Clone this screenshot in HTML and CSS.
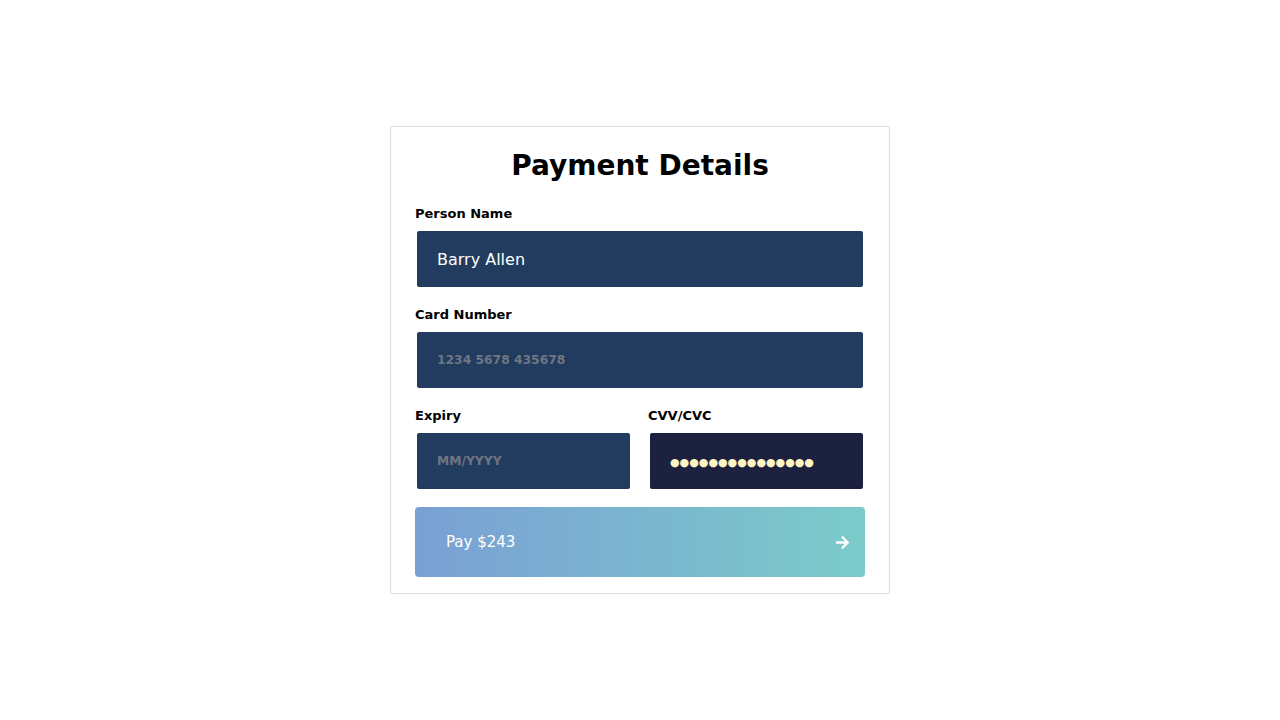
FILE: index.html
```html
<!DOCTYPE html>
<html lang="en">
<head>
<meta charset="utf-8">
<title>Payment Details</title>
<link rel="stylesheet" href="styles.css">
</head>
<body>
<main class="page">
  <form class="card">
    <h1 class="title">Payment Details</h1>
    <div class="field">
      <label class="label">Person Name</label>
      <div class="input"><span class="value">Barry Allen</span></div>
    </div>
    <div class="field">
      <label class="label">Card Number</label>
      <div class="input"><span class="placeholder">1234 5678 435678</span></div>
    </div>
    <div class="row">
      <div class="field">
        <label class="label">Expiry</label>
        <div class="input"><span class="placeholder">MM/YYYY</span></div>
      </div>
      <div class="field">
        <label class="label">CVV/CVC</label>
        <div class="input input-focus"><span class="dots">●●●●●●●●●●●●●●●</span></div>
      </div>
    </div>
    <button type="button" class="pay">
      <span>Pay $243</span>
      <svg class="arrow" viewBox="0 0 448 512" width="15" height="15"><path fill="#fff" d="M190.5 66.9l22.2-22.2c9.4-9.4 24.6-9.4 33.9 0L441 239c9.4 9.4 9.4 24.6 0 33.9L246.6 467.3c-9.4 9.4-24.6 9.4-33.9 0l-22.2-22.2c-9.5-9.5-9.3-25 .4-34.3L311.4 296H24c-13.3 0-24-10.7-24-24v-32c0-13.3 10.7-24 24-24h287.4L190.9 101.2c-9.8-9.3-10-24.8-.4-34.3z"/></svg>
    </button>
  </form>
</main>
</body>
</html>
```

FILE: styles.css
```css
* { box-sizing: border-box; }
html, body { margin: 0; padding: 0; background: #fff; }
body { font-family: "DejaVu Sans", "Noto Sans", sans-serif; color: #000; }
.page {
  display: flex;
  justify-content: center;
  padding-top: 126px;
}
.card {
  width: 500px;
  border: 1px solid #dddddd;
  border-radius: 3px;
  padding: 20px 24px 16px;
  display: flex;
  flex-direction: column;
}
.title {
  margin: 0 0 20px;
  text-align: center;
  font-size: 28px;
  line-height: 38px;
  font-weight: 700;
}
.field { display: flex; flex-direction: column; margin-bottom: 19px; }
.row .field { margin-bottom: 18px; }
.label {
  font-size: 13px;
  font-weight: 700;
  line-height: 18px;
  margin-bottom: 8px;
}
.input {
  margin: 0 2px;
  height: 56px;
  background: #223c5f;
  border-radius: 2px;
  display: flex;
  align-items: center;
  padding: 0 20px;
}
.input-focus { background: #1d2140; }
.value { color: #fff; font-size: 16px; font-weight: 400; }
.placeholder { color: #6f7681; font-size: 12.3px; font-weight: 700; }
.dots { color: #fff5c2; font-size: 11px; padding-top: 3px; }
.row { display: grid; grid-template-columns: 1fr 1fr; column-gap: 16px; }
.pay {
  height: 70px;
  border: 0;
  border-radius: 4px;
  background: linear-gradient(90deg, #7aa0d4 0%, #7bcbca 100%);
  display: flex;
  align-items: center;
  justify-content: space-between;
  padding: 0 15px 0 31px;
  color: #fff;
  font-family: inherit;
  font-size: 15px;
  cursor: pointer;
}
.arrow { display: block; }
```
